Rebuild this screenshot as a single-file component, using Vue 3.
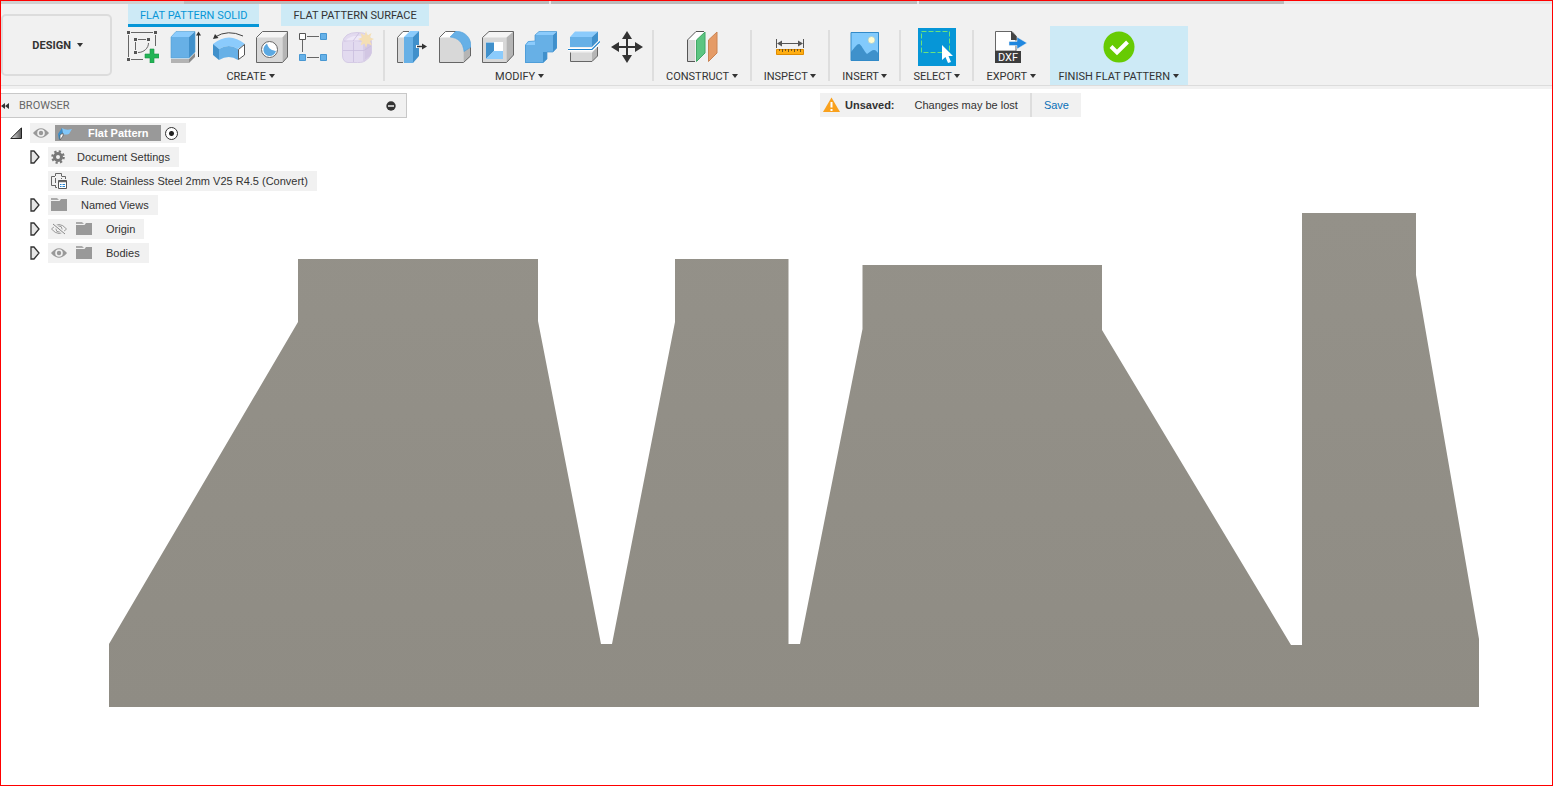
<script setup>
import { ref } from 'vue'

const tabs = ['FLAT PATTERN SOLID', 'FLAT PATTERN SURFACE']
const activeTab = ref(0)

const nodes = [
  { label: 'Document Settings', icon: 'gear', expandable: true },
  { label: 'Rule: Stainless Steel 2mm V25 R4.5 (Convert)', icon: 'rule' },
  { label: 'Named Views', icon: 'folder', expandable: true },
  { label: 'Origin', icon: 'folder', expandable: true, eye: 'hidden' },
  { label: 'Bodies', icon: 'folder', expandable: true, eye: 'shown' },
]
</script>

<template>
  <div class="window">
    <div class="docbar"><i class="seg first"></i><i class="seg a"></i><i class="seg b"></i><i class="seg c"></i></div>
    <header class="toolbar">
      <button class="design">DESIGN <span class="caret"></span></button>
      <div class="ribbon">
        <nav class="tabs">
          <button v-for="(t, i) in tabs" :key="t" class="tab" :class="{ active: i === activeTab }" @click="activeTab = i">{{ t }}</button>
        </nav>
        <div class="groups">
          <section class="group wide">
            <div class="icons">
              <button class="tool" aria-label="Create sketch">
                <svg viewBox="0 0 32 32"><path d="M4 1.5H26M28.5 4V15M1.5 4V26M4 28.5H16M11 8.500H19M8.500 11V19M21.500 12C21.500 17 17 21.500 11 21.500" fill="none" stroke="#666" /><path d="M0 0h3v3H0zM27 0h3v3h-3zM0 27h3v3H0zM7 7h3v3H7zM20 7h3v3h-3zM7 20h3v3H7z" fill="#555" /><path d="M23 18h4v5h5v4h-5v5h-4v-5h-5v-4h5z" fill="#22b455" stroke="#1b9446" stroke-width=".6" /></svg>
              </button>
              <button class="tool" aria-label="Extrude">
                <svg viewBox="0 0 32 32"><path d="M1 28H19V32H1z" fill="#b3b3b3" /><path d="M19 28l6-6v4l-6 6z" fill="#8b8b8b" /><path d="M1 6L6 .5H25L19 6z" fill="#8bcbfc" /><path d="M1 6H19V27H1z" fill="#67b0e6" /><path d="M19 6L25 .5V21L19 27z" fill="#4090cb" /><path d="M1 6L6 .5H25V21L19 27H1z" fill="none" stroke="#4f9dd4" stroke-width=".6" /><path d="M28.500 3V26" stroke="#333" /><path d="M28.500 .5l2.500 4h-5z" fill="#333" /></svg>
              </button>
              <button class="tool" aria-label="Bend">
                <svg viewBox="0 0 32 32"><path d="M0 13Q16 0 32 13L25 18Q16 12 6 18z" fill="#8bcbfc" /><path d="M0 13L6 18V29L0 24z" fill="#4090cb" /><path d="M6 18Q16 12 25 18V29Q16 23 6 29z" fill="#67b0e6" /><path d="M25.500 18.500L31.500 13.500V24L25.500 28.500z" fill="#fff" stroke="#555" /><path d="M2 6Q15-2 30 5" fill="none" stroke="#444" /><path d="M0 8l2-5 3.500 4z" fill="#333" /></svg>
              </button>
              <button class="tool" aria-label="Hole">
                <svg viewBox="0 0 32 32"><path d="M.5 6.500L6.500 .5H31.500L26.500 6.500z" fill="#f5f5f5" /><path d="M.5 6.500H26.500V31.500H.5z" fill="#d8d8d8" /><path d="M26.500 6.500L31.500 .5V26L26.500 31.500z" fill="#b5b5b5" /><path d="M.5 6.500L6.500 .5H31.500V26L26.500 31.500H.5z" fill="none" stroke="#666" /><circle cx="13.500" cy="18.500" r="8" fill="#fff" stroke="#666" /><path d="M11 12.500C13 19 16 19 20 20C18 27 9 26.500 7.500 20C7 17 8.500 14 11 12.500z" fill="#5ba9e2" /></svg>
              </button>
              <button class="tool" aria-label="Rectangular pattern">
                <svg viewBox="0 0 32 32"><path d="M8 5.500H20M3.500 9V21M8 26.500H20" stroke="#666" /><path d="M.5 2.500h6v6h-6z" fill="#fff" stroke="#555" /><path d="M21.500 2.500h6v6h-6zM.5 23.500h6v6h-6zM21.500 23.500h6v6h-6z" fill="#66b1e8" stroke="#4797d2" /></svg>
              </button>
              <button class="tool" aria-label="Create form" disabled>
                <svg viewBox="0 0 32 32"><path d="M.5 12Q1 7 5 4Q9 1.500 15 1.500Q22 1 27 5Q30 8 29.500 14V22Q28 27 23 30Q20 32 12 31.500H6Q1 31 .5 25z" fill="#e2daef" stroke="#d5cbe5" /><path d="M3 10Q8 5 14 5H18Q21 5 18 9L16 11H6z" fill="#eee8f7" /><path d="M23 11L29 7V24L23 29z" fill="#d2c6e3" /><path d="M1 19.500H22L29 15M11.500 11V31M22 11V30M2 10H22L28 6M11 10L17 2" fill="none" stroke="#c9bcdd" stroke-width=".8" /><path d="M24 0l1.500 4.500L29.500 2l-1.500 4.500 4 1.500-4 2 2 4.500-4.500-2L24 17l-1.500-4.500-4 2 1.500-4.500-4-2 4-1.500L18.500 2l4 2.500z" fill="#f4dfb5" /></svg>
              </button>
            </div>
            <button class="label">CREATE <span class="caret"></span></button>
          </section>
          <section class="group wide">
            <div class="icons">
              <button class="tool" aria-label="Press pull">
                <svg viewBox="0 0 32 32"><path d="M1.500 6.500L7 .5H14L9 6.500z" fill="#fff" /><path d="M1.500 6.500H8V31.500H1.500z" fill="#d8d8d8" /><path d="M7 31.500H1.500V6.500L7 .5H13" fill="none" stroke="#666" /><path d="M8 6L14 0H23L17 6z" fill="#8bcbfc" /><path d="M8 6H17V32H8z" fill="#67b0e6" /><path d="M17 6L23 0V25L17 32z" fill="#4090cb" /><path d="M20 15.500H28" stroke="#fff" stroke-width="3" /><path d="M21 15.500H28" stroke="#333" stroke-width="1.500" /><path d="M26 12.500l5 3-5 3z" fill="#333" /></svg>
              </button>
              <button class="tool" aria-label="Fillet">
                <svg viewBox="0 0 32 32"><path d="M.5 7L6.500 .5H17L12 6.500z" fill="#fff" /><path d="M.5 6.500H12Q24 8 24.500 20V31.500H.5z" fill="#d8d8d8" /><path d="M24.500 20L31.500 16V25L24.500 31.500z" fill="#b5b5b5" /><path d="M17 .5H6.500L.5 6.500V31.500H24.500L31.500 25V16" fill="none" stroke="#666" /><path d="M11 6L17 0C28 1 32 8 32 16L25 20.500C24 11 19 7 11 6z" fill="#67b0e6" stroke="#4c9cd8" stroke-width=".6" /></svg>
              </button>
              <button class="tool" aria-label="Shell">
                <svg viewBox="0 0 32 32"><path d="M.5 6.500L7 .5H31.500L24.500 6.500z" fill="#f5f5f5" /><path d="M.5 6.500H24.500V31.500H.5z" fill="#d8d8d8" /><path d="M24.500 6.500L31.500 .5V24L24.500 31.500z" fill="#b5b5b5" /><path d="M.5 6.500L7 .5H31.500V24L24.500 31.500H.5z" fill="none" stroke="#666" /><path d="M4 11H21V28H4z" fill="#fff" /><path d="M4 11.500H12V20L4 28z" fill="#4090cb" /><path d="M12 20H21V28H4z" fill="#8bcbfc" /></svg>
              </button>
              <button class="tool" aria-label="Combine">
                <svg viewBox="0 0 32 32"><path d="M10 4L14 .5H32L28 4zM0 14L3 10H10V14z" fill="#8bcbfc" /><path d="M10 4H28V21H18V32H0V14H10z" fill="#67b0e6" /><path d="M28 4L32 .5V17L28 21zM18 21H22V28L18 32z" fill="#4090cb" /><path d="M10 10V4L14 .5H31.500V17L28 21H22V28L18 31.500H.5V14L3.500 10.500z" fill="none" stroke="#4596d2" stroke-width=".7" /></svg>
              </button>
              <button class="tool" aria-label="Split body">
                <svg viewBox="0 0 32 32"><path d="M2 6L7 .5H30L24 6z" fill="#8bcbfc" /><path d="M2 6H24V16H2z" fill="#67b0e6" /><path d="M24 6L30 .5V10L24 16z" fill="#4090cb" /><path d="M2.500 21.500H24V30.500H2.500z" fill="#d8d8d8" /><path d="M24 21.500L29.500 16V25L24 30.500z" fill="#b5b5b5" /><path d="M2.500 21.500V30.500H24L29.500 25V16" fill="none" stroke="#666" /><path d="M0 18.500H24L32 10.500" fill="none" stroke="#fff" stroke-width="3" /><path d="M0 18.500H24L32 10.500" fill="none" stroke="#1b82cd" stroke-width="1.200" /></svg>
              </button>
              <button class="tool" aria-label="Move">
                <svg viewBox="0 0 32 32"><path d="M16 5V27M5 16H27" stroke="#333" stroke-width="2" /><path d="M16 0l5 8H11zM16 32l5-8H11zM0 16l8-5v10zM32 16l-8-5v10z" fill="#333" /></svg>
              </button>
            </div>
            <button class="label">MODIFY <span class="caret"></span></button>
          </section>
          <section class="group">
            <button class="tool" aria-label="Offset plane">
              <svg viewBox="0 0 32 32"><path d="M1.500 9L10 .5H19L10 9z" fill="#fff" /><path d="M1.500 9H9V30.500H1.500z" fill="#d8d8d8" /><path d="M9 30.500H1.500V9L10 .5H18" fill="none" stroke="#555" /><path d="M10.500 9L19 1V22L10.500 30.500z" fill="#5cc581" stroke="#41a866" /><path d="M22.500 9L31 1V22L22.500 30.500z" fill="#e59b66" stroke="#ca8352" /></svg>
            </button>
            <button class="label">CONSTRUCT <span class="caret"></span></button>
          </section>
          <section class="group">
            <button class="tool" aria-label="Measure">
              <svg viewBox="0 0 32 32"><path d="M2.500 8V17M29.500 8V17M4 12.500H28" stroke="#555" /><path d="M3 12.500l5-3v6zM29 12.500l-5-3v6z" fill="#555" /><path d="M2.500 18.500H29.500V23.500H2.500z" fill="#ffae12" stroke="#df8b00" /><path d="M5.500 18V20M8.500 18V21M11.500 18V20M14.500 18V21M17.500 18V20M20.500 18V21M23.500 18V20M26.500 18V21" stroke="#74561b" /></svg>
            </button>
            <button class="label">INSPECT <span class="caret"></span></button>
          </section>
          <section class="group">
            <button class="tool" aria-label="Insert image">
              <svg viewBox="0 0 32 32"><path d="M2 1H30V30H2z" fill="#82cafc" /><path d="M2 21C6 16 8 13 10 13S15 20 18 23C21 21 23 19 25 19S28 21 30 23V30H2z" fill="#3f91cb" /><circle cx="22.500" cy="9" r="3.500" fill="#fffbd0" stroke="#a4c9cf" stroke-width=".7" /><path d="M2 1.500H29.500V29.500H2z" fill="none" stroke="#328ac8" /></svg>
            </button>
            <button class="label">INSERT <span class="caret"></span></button>
          </section>
          <section class="group">
            <button class="tool select" aria-label="Window selection">
              <svg viewBox="0 0 38 38"><path d="M3.500 3.500H31.500V24.500H3.500z" fill="none" stroke="#6be27c" stroke-dasharray="5 2" /><path d="M24 17V32L27.500 29L30 35L33 34L30.500 28H35z" fill="#fff" /></svg>
            </button>
            <button class="label">SELECT <span class="caret"></span></button>
          </section>
          <section class="group last">
            <button class="tool" aria-label="Export DXF">
              <svg viewBox="0 0 32 32"><path d="M.5 20V.5H17L21 5V20z" fill="#fff" stroke="#666" /><path d="M16 0L22 6V9H16z" fill="#444" /><path d="M14 10.500H22V6L32 12L22 18V14.500H14z" fill="#2087df" stroke="#f1f1f1" stroke-width=".5" /><path d="M0 20H26V32H0z" fill="#3d3d3d" /><text x="13" y="30" text-anchor="middle" font-size="11" fill="#fff">DXF</text></svg>
            </button>
            <button class="label">EXPORT <span class="caret"></span></button>
          </section>
          <section class="group finish">
            <button class="tool" aria-label="Finish">
              <svg viewBox="0 0 32 32"><circle cx="16" cy="16" r="15.500" fill="#67cb03" /><path d="M8 15.500L14 21.500L24.500 11" fill="none" stroke="#fff" stroke-width="4" /></svg>
            </button>
            <button class="label">FINISH FLAT PATTERN <span class="caret"></span></button>
          </section>
        </div>
      </div>
    </header>

    <main class="viewport">
      <svg class="model" viewBox="1 89 1551 696" aria-label="Flat pattern body">
        <defs>
          <linearGradient id="steel" x1="0" y1="0" x2="0" y2="1">
            <stop offset="0" stop-color="#949189" /><stop offset="1" stop-color="#8f8c84" />
          </linearGradient>
        </defs>
        <path fill="url(#steel)" d="M109 707V644L298 322V259H538V321L601 644H612L675 322V259H788.500V644H800L862.500 329V265H1102V330L1291 645H1302V213H1416V275L1479 639V707z" />
      </svg>

      <aside class="browser">
        <div class="browser-head">
          <svg class="rewind" viewBox="0 0 8 6"><path d="M4 0V6L0 3zM8 0V6L4 3z" fill="#333" /></svg>
          <span class="title">BROWSER</span>
          <button class="collapse" aria-label="Collapse"><svg viewBox="0 0 10 10"><circle cx="5" cy="5" r="4.700" fill="#333" /><path d="M2 5H8" stroke="#fff" stroke-width="1.400" /></svg></button>
        </div>
        <ul class="tree">
          <li class="row root">
            <svg class="open" viewBox="0 0 12 12"><defs><linearGradient id="fold" x1="0" x2="1"><stop offset="0" stop-color="#eee" /><stop offset="1" stop-color="#555" /></linearGradient></defs><path d="M.8 11.500L11.500 .8V11.500z" fill="url(#fold)" stroke="#222" /></svg>
            <div class="chip">
              <svg class="icon16" viewBox="0 0 16 16"><path d="M0 8Q8-1.500 16 8Q8 17.500 0 8z" fill="#999" /><circle cx="8" cy="8" r="3.800" fill="#f1f1f1" /><circle cx="8" cy="8" r="2.200" fill="#999" /></svg>
              <div class="selected">
                <svg class="icon16" viewBox="0 0 16 16"><path d="M5 3Q9 6 15 4L12 9Q8 10 6 9L5 3z" fill="#82c7f8" /><path d="M1 9L5 3L6 9L2 15z" fill="#3d8fcb" /><path d="M3 10l3-2v3l-3 4z" fill="#fff" stroke="#555" stroke-width=".7" /></svg>
                <span>Flat Pattern</span>
              </div>
              <label class="activate"><input type="radio" name="active" checked aria-label="Activate Flat Pattern" /></label>
            </div>
          </li>
          <li v-for="n in nodes" :key="n.label" class="row child">
            <svg class="arrow" viewBox="0 0 10 14"><path v-if="n.expandable" d="M1 1H4L9 7L4 13H1z" fill="#e6e6e6" stroke="#333" stroke-width="1.300" /></svg>
            <div class="chip">
              <svg v-if="n.eye" class="icon16 eye" viewBox="0 0 16 16">
                <template v-if="n.eye === 'shown'"><path d="M0 8Q8-1.500 16 8Q8 17.500 0 8z" fill="#999" /><circle cx="8" cy="8" r="3.800" fill="#f1f1f1" /><circle cx="8" cy="8" r="2.200" fill="#999" /></template>
                <template v-else><path d="M.5 8Q8-1 15.500 8Q8 17 .5 8z" fill="none" stroke="#999" /><circle cx="8" cy="8" r="3" fill="none" stroke="#999" /><path d="M2 3L14 13" stroke="#f1f1f1" stroke-width="3" /><path d="M2 3L14 13" stroke="#888" /></template>
              </svg>
              <svg v-if="n.icon === 'folder'" class="icon16" viewBox="0 0 16 16"><path d="M0 1H6L8 3H0z" fill="#aaa" /><path d="M0 4H8.500L10 2H16V14H0z" fill="#999" /></svg>
              <svg v-else-if="n.icon === 'gear'" class="icon-gear" viewBox="0 0 14 14"><circle cx="7" cy="7" r="3.500" fill="none" stroke="#777" stroke-width="3" /><circle cx="7" cy="7" r="5.700" fill="none" stroke="#777" stroke-width="2.200" stroke-dasharray="2.240 2.240" /></svg>
              <svg v-else class="icon16" viewBox="0 0 16 16"><path d="M4 12.500H.5V3.500H4M4.500 3V.5H10.500V3M4.500 12V14.500H6M10.500 3.500H14.500V6M4.500 5V10M10.500 5V6" fill="none" stroke="#666" /><path d="M7.500 7.500H15.500V15.500H7.500z" fill="#fff" stroke="#555" /><path d="M7.500 8.500H15.500" stroke="#666" stroke-width="1.500" /><path d="M9 11.500H10.500M9 13.500H10.500M11.500 11.500H14M11.500 13.500H14" stroke="#2182cf" /></svg>
              <span>{{ n.label }}</span>
            </div>
          </li>
        </ul>
      </aside>

      <div class="notice" role="status">
        <svg class="warn" viewBox="0 0 17 16"><path d="M8.500 .5L17 15H0z" fill="#f9a11d" /><path d="M8.500 5V10.500M8.500 12V14" stroke="#fff" stroke-width="2" /></svg>
        <strong>Unsaved:</strong>
        <span>Changes may be lost</span>
        <a href="#">Save</a>
      </div>
    </main>
  </div>
</template>

<style scoped>
.window {
  min-height: 100vh;
  box-sizing: border-box;
  border: 1px solid #f00;
  display: flex;
  flex-direction: column;
  background: #fff;
  font: 11px/16px "Liberation Sans", Arial, sans-serif;
  color: #333;
}
button {
  border: 0;
  padding: 0;
  background: none;
  font: inherit;
  color: inherit;
}
svg { display: block; flex: none; }
.docbar { display: flex; gap: 2px; height: 3px; background: #e4e4e4; }
.seg { background: #bbb; flex: 366; }
.first { flex: 183; background: #d0d0d0; margin-right: -2px; }
.c { margin-right: 268px; }
.toolbar {
  display: flex;
  height: 85px;
  box-sizing: border-box;
  background: linear-gradient(#f1f1f1 81px, #dcdcdc 81px, #dcdcdc 82px, #f1f1f1 82px);
  font-family: Roboto, "Liberation Sans", sans-serif;
}
.caret {
  display: inline-block;
  border: 3px solid transparent;
  border-top: 4px solid #333;
  border-bottom: 0;
  vertical-align: 2px;
}
.design {
  width: 111px;
  height: 62px;
  margin: 10px 15px 0 0;
  padding: 2px 0 0 2px;
  border: 2px solid #dcdcdc;
  border-radius: 5px;
  font-weight: 700;
}
.design .caret { margin-left: 3px; }
.tabs { display: flex; gap: 22px; height: 23px; padding-left: 1px; align-items: flex-start; }
.tab {
  height: 22px;
  padding: 1px 12px 0;
  background: #cdeaf6;
  white-space: nowrap;
}
.tab.active { height: 23px; color: #0696d7; box-shadow: inset 0 -3px #0696d7; }
.groups { display: flex; height: 59px; margin-top: -1px; }
.group {
  display: flex;
  flex-direction: column;
  align-items: center;
  height: 51px;
  margin-top: 4px;
  padding: 0 12px;
  border-right: 2px solid #dedede;
}
.group.wide { padding: 0 9px 0 11px; }
.group.wide:first-child { padding-left: 0; }
.icons { display: flex; gap: 11px; }
.tool { width: 32px; height: 32px; margin-top: 1px; }
.tool svg { width: 100%; height: 100%; }
.select { width: 38px; height: 38px; margin: -2px 0 -3px; background: #0696d7; }
.label { margin-top: 6px; white-space: nowrap; }
.last { border-right: 0; }
.finish { margin: 0 0 0 2px; height: 55px; padding: 4px 9px 0; border: 0; background: #cdeaf6; }
.viewport { position: relative; flex: 1; display: flex; align-items: flex-start; padding-top: 4px; }
.model { position: absolute; inset: 0; width: 100%; height: 100%; }
.browser { position: relative; width: 406px; }
.browser-head {
  display: flex;
  align-items: center;
  height: 25px;
  box-sizing: border-box;
  border: 1px solid #c8c8c8;
  border-left: 0;
  background: #f1f1f1;
  color: #666;
  font-family: Roboto, "Liberation Sans", sans-serif;
}
.rewind { width: 8px; height: 6px; }
.title { margin-left: 10px; }
.collapse { margin: 0 10px 0 auto; }
.collapse svg { width: 10px; height: 10px; }
.tree { list-style: none; margin: 5px 0 0; padding: 0; }
.row { display: flex; align-items: center; height: 20px; margin-bottom: 4px; }
.root { padding-left: 9px; }
.open { width: 12px; height: 12px; margin-right: 8px; }
.child { padding-left: 29px; }
.arrow { width: 10px; height: 14px; margin-right: 8px; }
.chip { display: flex; align-items: center; height: 20px; padding: 0 9px 0 3px; background: #f1f1f1; }
.icon16 { width: 16px; height: 16px; }
.icon-gear { width: 14px; height: 14px; margin-right: -2px; }
.chip > span { margin-left: 14px; white-space: nowrap; }
.eye { margin-right: 9px; }
.selected {
  display: flex;
  align-items: center;
  height: 16px;
  margin-left: 6px;
  padding: 0 12px 0 2px;
  background: #999;
  color: #fff;
  font-weight: 700;
}
.selected span { margin-left: 15px; }
.root .chip { padding-right: 8px; }
.activate { display: flex; margin-left: 4px; }
.activate input {
  appearance: none;
  width: 13px;
  height: 13px;
  margin: 0;
  border: 1px solid #333;
  border-radius: 50%;
  background: radial-gradient(circle, #222 2px, #fff 3px);
}
.notice {
  position: relative;
  display: flex;
  align-items: center;
  height: 24px;
  margin-left: 413px;
  padding-left: 3px;
  background: #f1f1f1;
  white-space: nowrap;
}
.warn { width: 17px; height: 16px; }
.notice strong { margin: 0 20px 0 5px; }
.notice a {
  margin-left: 12px;
  padding: 0 12px;
  line-height: 24px;
  border-left: 2px solid #ddd;
  color: #0a70b7;
  text-decoration: none;
}
</style>

<style>
body { margin: 0; }
</style>
